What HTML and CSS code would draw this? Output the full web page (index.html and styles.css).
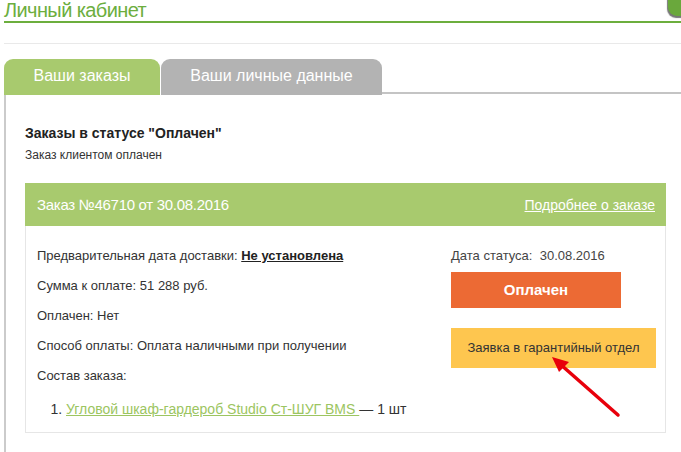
FILE: index.html
```html
<!DOCTYPE html>
<html lang="ru">
<head>
<meta charset="utf-8">
<link rel="stylesheet" href="styles.css">
</head>
<body>
<div class="page">
  <div class="corner"></div>
  <h1 class="title">Личный кабинет</h1>
  <div class="sep"></div>
  <div class="tabs">
    <div class="tab tab-active">Ваши заказы</div>
    <div class="tab tab-gray">Ваши личные данные</div>
    <div class="tab-fill"></div>
  </div>
  <div class="panel">
    <div class="heading">Заказы в статусе "Оплачен"</div>
    <div class="subheading">Заказ клиентом оплачен</div>
    <div class="card">
      <div class="card-head">
        <span class="card-title">Заказ №46710 от 30.08.2016</span>
        <a class="card-link" href="#">Подробнее о заказе</a>
      </div>
      <div class="card-body">
        <div class="info">
          <div class="line">Предварительная дата доставки: <b class="strong-u">Не установлена</b></div>
          <div class="line">Сумма к оплате: 51 288 руб.</div>
          <div class="line">Оплачен: Нет</div>
          <div class="line">Способ оплаты: Оплата наличными при получении</div>
          <div class="line">Состав заказа:</div>
          <ol class="items">
            <li><a class="item-link" href="#">Угловой шкаф-гардероб Studio Ст-ШУГ BMS </a> — 1 шт</li>
          </ol>
        </div>
        <div class="side">
          <div class="line">Дата статуса:&nbsp; 30.08.2016</div>
          <div class="btn-status">Оплачен</div>
          <div class="btn-warranty">Заявка в гарантийный отдел</div>
        </div>
      </div>
    </div>
  </div>
  <svg class="arrow" width="681" height="452" viewBox="0 0 681 452">
    <line x1="618" y1="415" x2="560" y2="364" stroke="#e8000b" stroke-width="3.5" stroke-linecap="round"/>
    <polygon points="552,357 569,362 559,372" fill="#e8000b"/>
  </svg>
</div>
</body>
</html>
```

FILE: styles.css
```css
html, body {
  margin: 0;
  padding: 0;
  background: #fff;
}
body {
  font-family: "Liberation Sans", Arial, sans-serif;
  color: #333;
  width: 681px;
  height: 452px;
  overflow: hidden;
}
.page {
  position: relative;
  padding-left: 4px;
  height: 452px;
  overflow: hidden;
}
.corner {
  position: absolute;
  top: -4px;
  right: -4px;
  width: 17px;
  height: 20px;
  background: #6aa83c;
  border-bottom-left-radius: 9px;
  box-shadow: -1px 2px 1px #777;
}
.title {
  margin: 0;
  font-weight: normal;
  font-size: 20px;
  line-height: 21px;
  color: #6cae3e;
  border-bottom: 2px solid #6cae3e;
  letter-spacing: -0.6px;
}
.sep {
  margin-top: 20px;
  border-top: 1px solid #e9e9e9;
}
.tabs {
  display: flex;
  margin-top: 15px;
  height: 36px;
}
.tab {
  height: 36px;
  line-height: 34px;
  text-align: center;
  font-size: 16px;
  color: #fff;
  border-radius: 9px 9px 0 0;
}
.tab-active {
  width: 156px;
  background: #a8ca6e;
}
.tab-gray {
  width: 221px;
  margin-left: 1px;
  background: #b3b3b3;
}
.tab-fill {
  flex: 1;
  border-bottom: 2px solid #c4c4c4;
  height: 33px;
}
.panel {
  box-sizing: border-box;
  border-left: 2px solid #cbcbcb;
  padding: 0 15px 0 19px;
  height: 357px;
}
.heading {
  padding-top: 29px;
  font-size: 14px;
  font-weight: bold;
  line-height: 18px;
  color: #222;
}
.subheading {
  margin-top: 5px;
  font-size: 12px;
  line-height: 16px;
  color: #333;
}
.card {
  margin-top: 20px;
  border: 1px solid #e6e6e6;
  border-top: none;
}
.card-head {
  display: flex;
  justify-content: space-between;
  align-items: center;
  height: 43px;
  margin: 0 -1px;
  padding: 0 11px 0 12px;
  background: #a8ca6e;
  color: #fff;
}
.card-title {
  font-size: 15px;
  letter-spacing: -0.3px;
}
.card-link {
  font-size: 14px;
  color: #fff;
  text-decoration: underline;
}
.card-body {
  display: flex;
  justify-content: space-between;
  padding: 15px 9px 8px 11px;
  font-size: 13px;
}
.line {
  line-height: 30px;
  color: #333;
}
.strong-u {
  text-decoration: underline;
  color: #222;
}
.items {
  margin: 3px 0 0;
  padding-left: 29px;
  line-height: 30px;
  font-size: 14px;
  color: #333;
}
.item-link {
  color: #9cc561;
  text-decoration: underline;
}
.side {
  width: 205px;
}
.side .line {
  color: #444;
}
.btn-status {
  width: 170px;
  height: 36px;
  margin-top: 1px;
  line-height: 36px;
  text-align: center;
  background: #ec6a34;
  color: #fff;
  font-weight: bold;
  font-size: 15px;
}
.btn-warranty {
  height: 40px;
  margin-top: 20px;
  line-height: 40px;
  text-align: center;
  background: #fec64f;
  color: #333;
  font-size: 13px;
}
.arrow {
  position: absolute;
  left: 0;
  top: 0;
  pointer-events: none;
}
```
